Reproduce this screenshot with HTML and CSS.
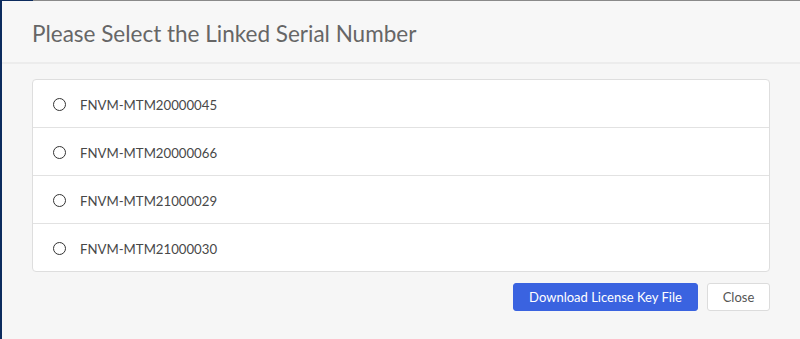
FILE: index.html
```html
<!DOCTYPE html>
<html>
<head>
<meta charset="utf-8">
<link rel="stylesheet" href="styles.css">
</head>
<body>
<div class="page">
  <div class="topline"></div>
  <div class="modal">
    <div class="header">
      <h1 class="title">Please Select the Linked Serial Number</h1>
    </div>
    <div class="body">
      <div class="list">
        <label class="row"><span class="radio"></span><span class="serial">FNVM-MTM20000045</span></label>
        <label class="row"><span class="radio"></span><span class="serial">FNVM-MTM20000066</span></label>
        <label class="row"><span class="radio"></span><span class="serial">FNVM-MTM21000029</span></label>
        <label class="row"><span class="radio"></span><span class="serial">FNVM-MTM21000030</span></label>
      </div>
      <div class="actions">
        <button class="btn btn-primary">Download License Key File</button>
        <button class="btn btn-default">Close</button>
      </div>
    </div>
  </div>
</div>
</body>
</html>
```
FILE: styles.css
```css
html, body {
  margin: 0;
  padding: 0;
  width: 800px;
  height: 339px;
  overflow: hidden;
  background: #f6f6f6;
  font-family: Lato, "Open Sans", sans-serif;
}
.page {
  height: 339px;
  border-left: 2px solid #0c2b5e;
  box-sizing: border-box;
  display: flex;
  flex-direction: column;
}
.topline {
  height: 1px;
  flex: none;
  background: linear-gradient(to right, #0c2b5e 0, #0c2b5e 31px, #8a8a8a 31px, #8a8a8a 100%);
}
.modal {
  flex: 1;
  display: flex;
  flex-direction: column;
  background: #f6f6f6;
}
.header {
  height: 63px;
  box-sizing: border-box;
  padding: 0 30px;
  display: flex;
  align-items: center;
  background: #f7f7f7;
  border-bottom: 2px solid #ececec;
}
.title {
  margin: 0;
  font-size: 22.5px;
  font-weight: 400;
  color: #666666;
  padding-top: 3px;
}
.body {
  padding: 15px 30px 0 30px;
}
.list {
  background: #ffffff;
  border: 1px solid #dedede;
  border-radius: 4px;
}
.row {
  height: 48px;
  box-sizing: border-box;
  padding-top: 2px;
  display: flex;
  align-items: center;
  padding-left: 20px;
  border-top: 1px solid #e2e2e2;
}
.row:first-child {
  border-top: none;
  height: 47px;
}
.radio {
  width: 11px;
  height: 11px;
  border: 1.3px solid #333;
  border-radius: 50%;
  margin-right: 14px;
  flex: none;
}
.serial {
  font-size: 13.2px;
  color: #484848;
}
.actions {
  display: flex;
  justify-content: flex-end;
  gap: 9px;
  margin-top: 11px;
}
.btn {
  height: 28px;
  font-family: Lato, "Open Sans", sans-serif;
  font-size: 13px;
  border-radius: 3px;
  padding: 0;
  white-space: nowrap;
  cursor: pointer;
}
.btn-primary {
  background: #3a63e0;
  color: #ffffff;
  border: 1px solid #3a63e0;
  width: 185px;
}
.btn-default {
  background: #ffffff;
  color: #555555;
  border: 1px solid #dcdcdc;
  width: 63px;
}
```
